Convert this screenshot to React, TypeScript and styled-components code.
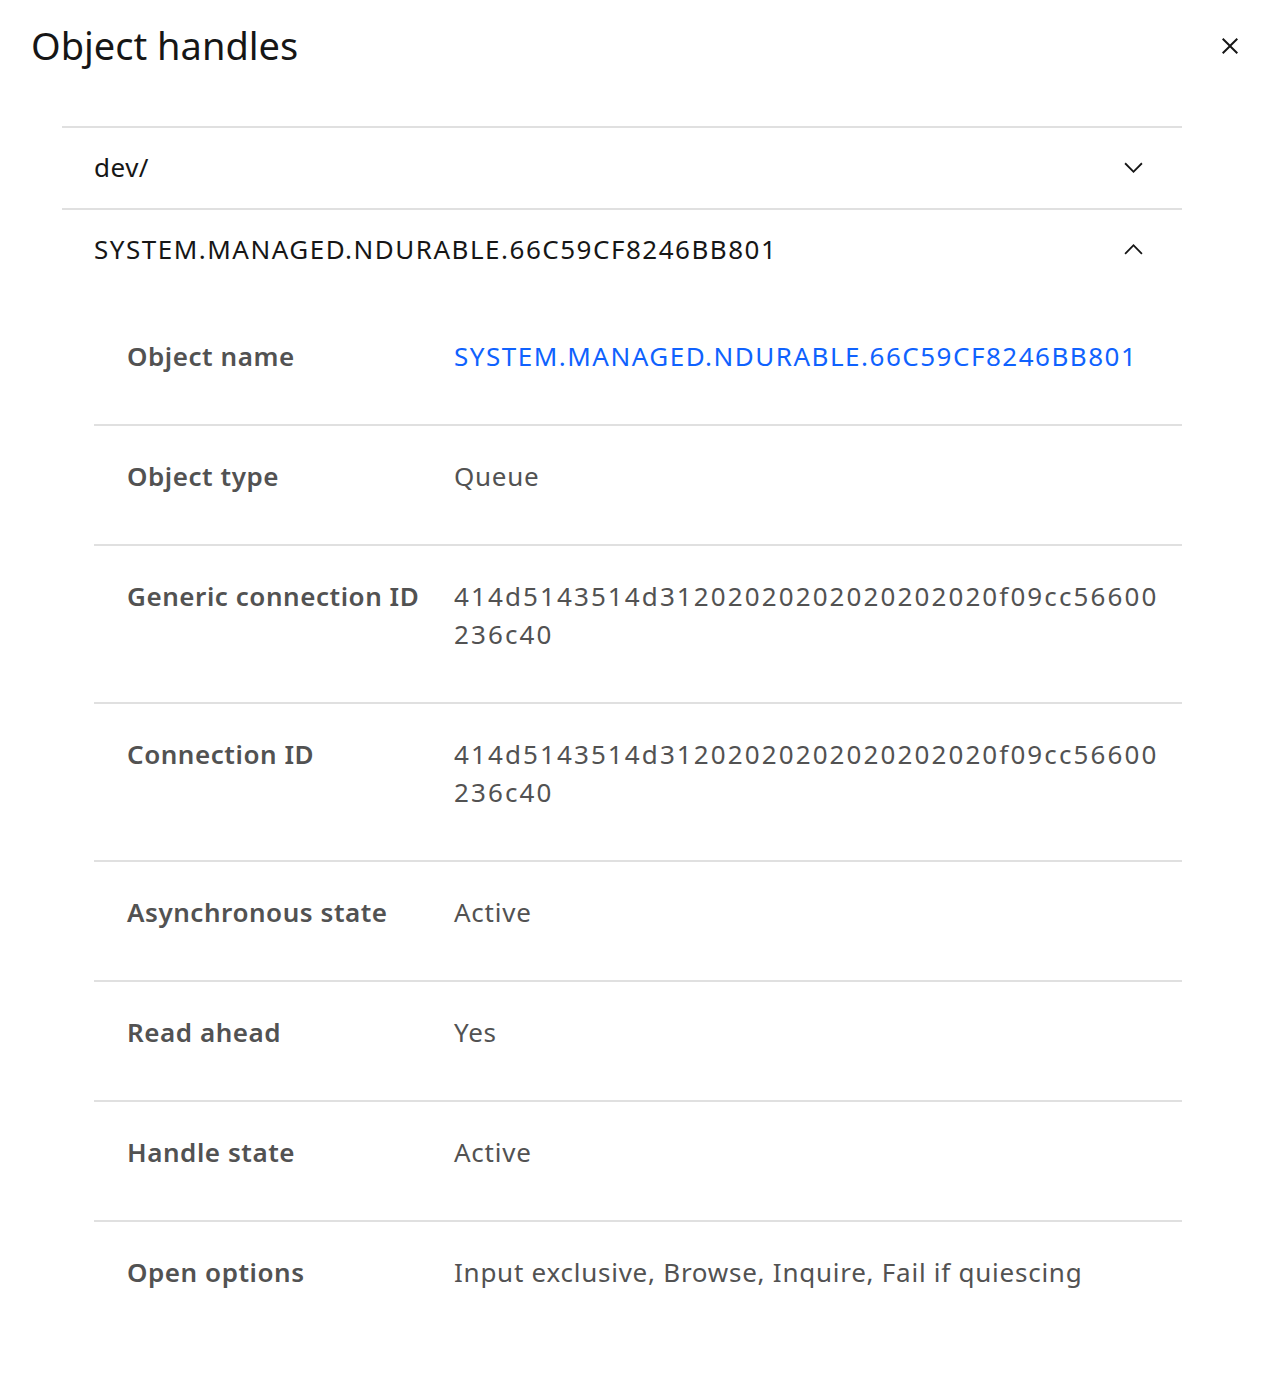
import React, { useState } from 'react';
import styled, { createGlobalStyle } from 'styled-components';

const GlobalStyle = createGlobalStyle`
  body {
    margin: 0;
    background: #ffffff;
    font-family: "Noto Sans", "Liberation Sans", sans-serif;
    color: #161616;
  }
`;

const Modal = styled.div`
  width: 1268px;
  min-height: 1390px;
  background: #ffffff;
`;

const ModalHeader = styled.div`
  height: 126px;
  display: flex;
  justify-content: space-between;
  align-items: flex-start;
  padding: 21px 22px 0 31px;
  box-sizing: border-box;
`;

const Title = styled.h2`
  margin: 0;
  font-size: 38px;
  line-height: 48px;
  font-weight: 400;
  color: #161616;
`;

const CloseButton = styled.button`
  margin-top: 9px;
  width: 32px;
  height: 32px;
  padding: 0;
  border: none;
  background: transparent;
  display: flex;
  align-items: center;
  justify-content: center;
  cursor: pointer;
  color: #161616;
`;

const ModalBody = styled.div`
  padding: 0 86px 48px 62px;
`;

const AccordionItem = styled.div`
  border-top: 2px solid #e0e0e0;
`;

const AccordionHeading = styled.button`
  width: 100%;
  height: 80px;
  display: flex;
  align-items: center;
  justify-content: space-between;
  padding: 0 34px 2px 32px;
  box-sizing: border-box;
  border: none;
  background: transparent;
  font-family: inherit;
  font-size: 26px;
  color: #161616;
  text-align: left;
  cursor: pointer;
`;

const HeadingText = styled.span<{ $wide?: boolean }>`
  letter-spacing: ${props => (props.$wide ? '1.5px' : '0.5px')};
`;

const Chevron = styled.svg<{ $open: boolean }>`
  width: 29px;
  height: 29px;
  fill: #161616;
  transform: rotate(${props => (props.$open ? '180deg' : '0deg')});
`;

const AccordionContent = styled.div`
  padding: 16px 0 0 32px;
`;

const Row = styled.div`
  display: grid;
  grid-template-columns: 360px 1fr;
  border-bottom: 2px solid #e0e0e0;

  &:last-child {
    border-bottom: none;
  }
`;

const Label = styled.div`
  padding: 31px 16px 49px 33px;
  font-size: 26px;
  line-height: 38px;
  letter-spacing: 0.55px;
  font-weight: 600;
  color: #525252;
`;

const Value = styled.div<{ $link?: boolean; $spacing: number }>`
  padding: 31px 16px 49px 0;
  font-size: 26px;
  line-height: 38px;
  letter-spacing: ${props => props.$spacing}px;
  color: ${props => (props.$link ? '#0f62fe' : '#525252')};
`;

const ValueLine = styled.span`
  display: block;
`;

const ChevronIcon = ({ open }: { open: boolean }) => (
  <Chevron $open={open} viewBox="0 0 16 16">
    <path d="M8 11L3 6 3.7 5.3 8 9.6 12.3 5.3 13 6z" />
  </Chevron>
);

const details: { label: string; value: string[]; link?: boolean; spacing?: number }[] = [
  { label: 'Object name', value: ['SYSTEM.MANAGED.NDURABLE.66C59CF8246BB801'], link: true, spacing: 1.5 },
  { label: 'Object type', value: ['Queue'] },
  { label: 'Generic connection ID', value: ['414d5143514d31202020202020202020f09cc56600', '236c40'], spacing: 2.1 },
  { label: 'Connection ID', value: ['414d5143514d31202020202020202020f09cc56600', '236c40'], spacing: 2.1 },
  { label: 'Asynchronous state', value: ['Active'] },
  { label: 'Read ahead', value: ['Yes'] },
  { label: 'Handle state', value: ['Active'] },
  { label: 'Open options', value: ['Input exclusive, Browse, Inquire, Fail if quiescing'] },
];

const App: React.FC = () => {
  const [open, setOpen] = useState<string>('system');

  const toggle = (id: string) => setOpen(open === id ? '' : id);

  return (
    <Modal>
      <GlobalStyle />
      <ModalHeader>
        <Title>Object handles</Title>
        <CloseButton aria-label="Close">
          <svg width="32" height="32" viewBox="0 0 16 16" fill="currentColor">
            <path d="M12 4.7L11.3 4 8 7.3 4.7 4 4 4.7 7.3 8 4 11.3 4.7 12 8 8.7 11.3 12 12 11.3 8.7 8z" />
          </svg>
        </CloseButton>
      </ModalHeader>

      <ModalBody>
        <AccordionItem>
          <AccordionHeading onClick={() => toggle('dev')}>
            <HeadingText>dev/</HeadingText>
            <ChevronIcon open={open === 'dev'} />
          </AccordionHeading>
        </AccordionItem>

        <AccordionItem>
          <AccordionHeading onClick={() => toggle('system')}>
            <HeadingText $wide>SYSTEM.MANAGED.NDURABLE.66C59CF8246BB801</HeadingText>
            <ChevronIcon open={open === 'system'} />
          </AccordionHeading>
          {open === 'system' && (
            <AccordionContent>
              {details.map(item => (
                <Row key={item.label}>
                  <Label>{item.label}</Label>
                  <Value $link={item.link} $spacing={item.spacing ?? 0.75}>
                    {item.value.map(line => (
                      <ValueLine key={line}>{line}</ValueLine>
                    ))}
                  </Value>
                </Row>
              ))}
            </AccordionContent>
          )}
        </AccordionItem>
      </ModalBody>
    </Modal>
  );
};

export default App;
